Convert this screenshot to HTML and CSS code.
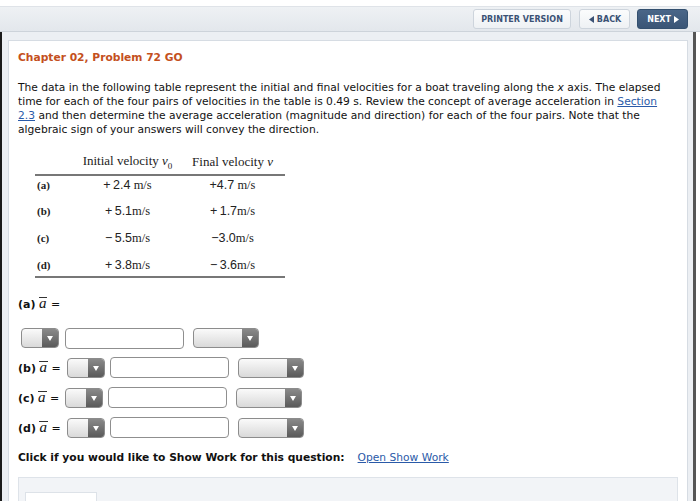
FILE: index.html
```html
<!DOCTYPE html>
<html>
<head>
<meta charset="utf-8">
<link rel="stylesheet" href="styles.css">
</head>
<body>
<div class="topbar">
  <button class="tbtn pv">PRINTER VERSION</button>
  <button class="tbtn back"><svg width="5" height="7" viewBox="0 0 5 7"><path d="M5 0 L0 3.5 L5 7 Z" fill="#3b5275"/></svg>BACK</button>
  <button class="tbtn next">NEXT<svg width="5" height="7" viewBox="0 0 5 7"><path d="M0 0 L5 3.5 L0 7 Z" fill="#fff"/></svg></button>
</div>
<div class="frame">
  <div class="card">
    <h1 class="title">Chapter 02, Problem 72 GO</h1>
    <p class="prompt">The data in the following table represent the initial and final velocities for a boat traveling along the <i>x</i> axis. The elapsed time for each of the four pairs of velocities in the table is 0.49 s. Review the concept of average acceleration in <a href="#">Section 2.3</a> and then determine the average acceleration (magnitude and direction) for each of the four pairs. Note that the algebraic sign of your answers will convey the direction.</p>

    <table class="data">
      <thead>
        <tr><th class="c0"></th><th class="c1">Initial velocity <i>v</i><sub>0</sub></th><th class="c2">Final velocity <i>v</i></th></tr>
      </thead>
      <tbody>
        <tr><td class="lab">(a)</td><td><span class="n">+&thinsp;2.4</span> m/s</td><td><span class="n">+4.7</span> m/s</td></tr>
        <tr><td class="lab">(b)</td><td><span class="n">+&thinsp;5.1</span>m/s</td><td><span class="n">+&thinsp;1.7</span>m/s</td></tr>
        <tr><td class="lab">(c)</td><td><span class="n">&minus;&thinsp;5.5</span>m/s</td><td><span class="n">&minus;3.0</span>m/s</td></tr>
        <tr><td class="lab">(d)</td><td><span class="n">+&thinsp;3.8</span>m/s</td><td><span class="n">&minus;&thinsp;3.6</span>m/s</td></tr>
      </tbody>
    </table>

    <div class="qlabel first"><b>(a)</b> <span class="abar">a</span> =</div>
    <div class="answer solo">
      <div class="sel s1"><span class="arr"></span></div>
      <div class="inp"></div>
      <div class="sel s2"><span class="arr"></span></div>
    </div>

    <div class="answer">
      <div class="qlabel"><b>(b)</b> <span class="abar">a</span> =</div>
      <div class="sel s1"><span class="arr"></span></div>
      <div class="inp"></div>
      <div class="sel s2"><span class="arr"></span></div>
    </div>
    <div class="answer">
      <div class="qlabel"><b>(c)</b> <span class="abar">a</span> =</div>
      <div class="sel s1"><span class="arr"></span></div>
      <div class="inp"></div>
      <div class="sel s2"><span class="arr"></span></div>
    </div>
    <div class="answer">
      <div class="qlabel"><b>(d)</b> <span class="abar">a</span> =</div>
      <div class="sel s1"><span class="arr"></span></div>
      <div class="inp"></div>
      <div class="sel s2"><span class="arr"></span></div>
    </div>

    <div class="showwork"><b>Click if you would like to Show Work for this question:</b><a href="#">Open Show Work</a></div>

    <div class="panel"><div class="tab"></div></div>
  </div>
</div>
</body>
</html>
```

FILE: styles.css
```css
* { box-sizing: border-box; }
html, body { margin: 0; padding: 0; background: #fff; height: 501px; overflow: hidden; }
body { font-family: "DejaVu Sans", Verdana, sans-serif; color: #111; }

.topbar {
  margin-top: 6px;
  height: 26px;
  background: linear-gradient(#eef1f4, #e3e7ec);
  border-top: 1px solid #dfe3e8;
  border-bottom: 1px solid #cdd3da;
  display: flex;
  justify-content: flex-end;
  align-items: center;
  gap: 7px;
  padding-right: 12px;
}
.tbtn {
  height: 20px;
  border: 1px solid #cdd4dc;
  border-radius: 3px;
  background: linear-gradient(#fbfcfd, #eef1f4);
  color: #3b5275;
  font-family: "DejaVu Sans", sans-serif;
  font-weight: bold;
  font-size: 8px;
  padding: 0 7px;
  display: flex;
  align-items: center;
  gap: 3px;
}
.tbtn.back { padding: 0 8px 0 9px; margin-left: 1px; }
.tbtn.next {
  background: linear-gradient(#4a6688, #3a5576);
  border-color: #34506f;
  color: #fff;
  padding: 0 8px 0 9px;
}

.frame {
  border-left: 2px solid #1b1b1b;
  border-right: 3px solid #555;
  width: 696px;
  background: #eceff3;
  padding: 8px 5px 0 6px;
  height: 470px;
}
.card {
  background: #fff;
  border: 1px solid #d6dce3;
  padding: 10px 9px 0 9px;
  height: 480px;
}
.title {
  margin: 0;
  font-size: 10.7px;
  font-weight: bold;
  color: #c4501d;
  line-height: 14px;
}
.prompt {
  margin: 16px 0 0 0;
  padding-right: 10px;
  font-size: 10.7px;
  line-height: 14px;
  color: #111;
}
.prompt a { color: #2a5aa8; }

.data {
  margin: 14px 0 0 17px;
  border-collapse: collapse;
  font-family: "Liberation Serif", serif;
  font-size: 13px;
  color: #222;
}
.data th {
  font-weight: normal;
  padding: 2px 0 3px;
  height: 19px;
  border-bottom: 2px solid #777;
  white-space: nowrap;
  text-align: center;
}
.data th.c0 { width: 40px; }
.data th.c1 { width: 105px; }
.data th.c2 { width: 105px; }
.data sub { font-size: 9px; }
.data td {
  height: 27px;
  text-align: center;
  vertical-align: top;
  line-height: 18px;
  padding: 0;
  font-size: 12.5px;
  white-space: nowrap;
}
.data tbody tr:last-child td { border-bottom: 2px solid #777; height: 21px; }
.data td.lab { text-align: left; font-weight: bold; padding-left: 2px; font-size: 11px; }
.data .n { font-family: "Liberation Sans", sans-serif; font-size: 12.5px; }

.qlabel { font-size: 11px; white-space: nowrap; }
.qlabel.first { margin-top: 19px; }
.abar {
  display: inline-block;
  font-family: "Liberation Serif", serif;
  font-style: italic;
  font-size: 15px;
  line-height: 9px;
  border-top: 1px solid #333;
  padding: 1px 1px 0 0;
}

.answer {
  display: flex;
  align-items: center;
  height: 30px;
}
.answer.solo { margin-top: 13px; padding-left: 3px; height: 29px; }
.answer.solo .sel.s1 { margin-right: 6px; }
.answer .qlabel { margin-right: 6px; }

.sel {
  height: 20px;
  border: 1px solid #8c8c8c;
  border-radius: 4px;
  background: linear-gradient(#fafafa, #d9d9d9);
  position: relative;
  overflow: hidden;
}
.sel.s1 { width: 38px; margin-right: 5px; }
.sel.s2 { width: 66px; margin-left: 9px; }
.arr {
  position: absolute;
  right: 0; top: 0; bottom: 0;
  width: 16px;
  background: linear-gradient(#8a8a8a, #5a5a5a);
}
.arr::after {
  content: "";
  position: absolute;
  left: 5px; top: 7px;
  border-left: 3px solid transparent;
  border-right: 3px solid transparent;
  border-top: 5px solid #fff;
}
.inp {
  width: 119px;
  height: 21px;
  border: 1px solid #8f8f8f;
  border-radius: 4px;
  background: #fff;
}

.showwork {
  margin-top: 8px;
  font-size: 10.7px;
  display: flex;
  gap: 13px;
}
.showwork a { color: #2a5aa8; }

.panel {
  margin-top: 13px;
  height: 40px;
  background: #f2f4f7;
  border: 1px solid #dee3e9;
  padding: 14px 0 0 6px;
}
.tab {
  width: 72px;
  height: 20px;
  background: #fff;
  border: 1px solid #dde2e8;
}
```
